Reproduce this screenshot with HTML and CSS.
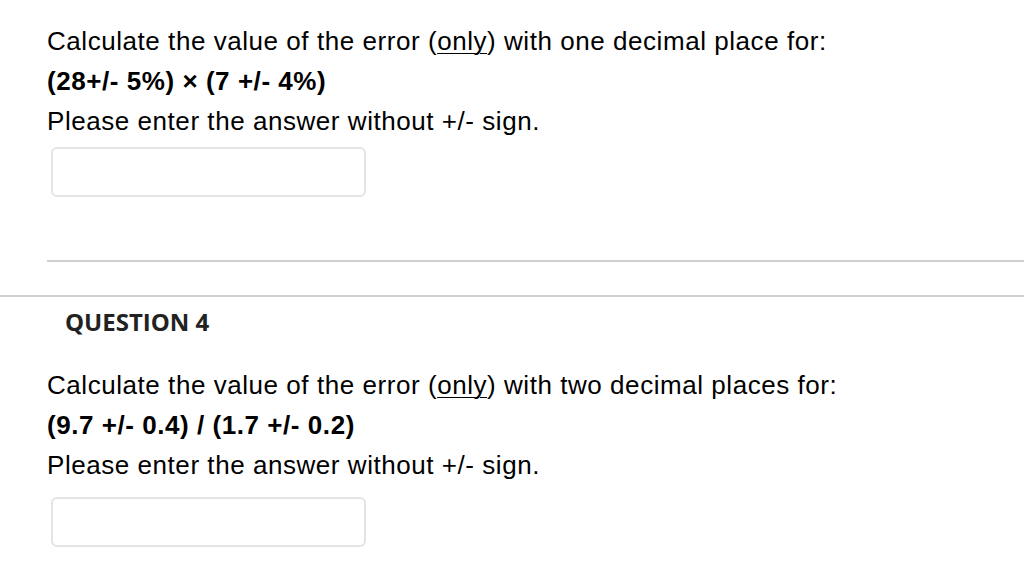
FILE: index.html
```html
<!DOCTYPE html>
<html>
<head>
<meta charset="utf-8">
<link rel="stylesheet" href="styles.css">
</head>
<body>
<div class="question">
  <div class="qtext">
    <p>Calculate the value of the error (<u>only</u>) with one decimal place for:</p>
    <p class="expr">(28+/- 5%) × (7 +/- 4%)</p>
    <p>Please enter the answer without +/- sign.</p>
  </div>
  <div class="answer"><input type="text" class="field"></div>
  <hr class="inner-rule">
</div>
<hr class="outer-rule">
<div class="question q4">
  <h3 class="qtitle">QUESTION 4</h3>
  <div class="qtext">
    <p>Calculate the value of the error (<u>only</u>) with two decimal places for:</p>
    <p class="expr">(9.7 +/- 0.4) / (1.7 +/- 0.2)</p>
    <p>Please enter the answer without +/- sign.</p>
  </div>
  <div class="answer"><input type="text" class="field"></div>
</div>
</body>
</html>
```
FILE: styles.css
```css
html, body {
  margin: 0;
  padding: 0;
  background: #fff;
}
body {
  overflow: hidden;
  height: 579px;
}
.question {
  padding-left: 47px;
}
.question:first-child {
  padding-top: 21px;
}
.qtext p {
  margin: 0;
  font-family: "Liberation Sans", Arial, sans-serif;
  font-size: 26px;
  letter-spacing: 0.55px;
  line-height: 40px;
  color: #000;
}
.qtext .expr {
  font-weight: bold;
}
.qtext u {
  text-decoration-thickness: 1px;
  text-underline-offset: 3px;
}
.answer {
  padding: 6px 0 0 4px;
}
.field {
  display: block;
  box-sizing: border-box;
  width: 315px;
  height: 50px;
  border: 2px solid #e4e4e4;
  border-radius: 6px;
  background: #fff;
  margin: 0;
  padding: 0;
  outline: none;
}
.inner-rule {
  margin: 63px 0 0 0;
  border: 0;
  border-top: 2px solid #cfcfcf;
  height: 0;
}
.outer-rule {
  margin: 33px 0 0 0;
  border: 0;
  border-top: 2px solid #cfcfcf;
  height: 0;
}
.q4 .qtitle {
  margin: 8px 0 0 18px;
  font-family: "Open Sans", sans-serif;
  font-weight: bold;
  font-size: 24px;
  line-height: 33px;
  color: #222;
}
.q4 .qtext {
  margin-top: 27px;
}
.q4 .answer {
  padding-top: 12px;
}
```
